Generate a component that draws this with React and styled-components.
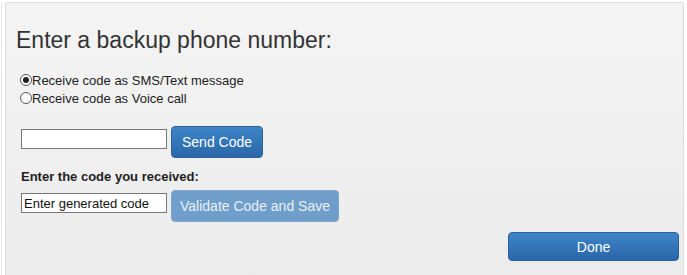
import React, { useState } from "react";
import styled, { createGlobalStyle } from "styled-components";

const GlobalStyle = createGlobalStyle`
  html, body {
    margin: 0;
    padding: 0;
    background: #ffffff;
    font-family: Arial, "Liberation Sans", sans-serif;
    overflow: hidden;
  }
`;

const Outer = styled.div`
  margin: 2px 3px 0 1px;
  padding: 0 0 0 3px;
  border-left: 1px solid #e4e4e4;
  height: 280px;
`;

const Panel = styled.div`
  box-sizing: border-box;
  height: 280px;
  border: 1px solid #dcdcdc;
  border-radius: 2px;
  background: linear-gradient(#f4f4f4, #ebebeb);
  padding: 23px 4px 0 10px;
  color: #333;
`;

const Heading = styled.h2`
  margin: 0 0 17px 0;
  font-size: 23px;
  font-weight: normal;
  line-height: 28px;
  color: #333;
`;

const RadioList = styled.div`
  display: flex;
  flex-direction: column;
  padding-left: 4px;
  margin-bottom: 19px;
`;

const RadioRow = styled.label`
  display: flex;
  align-items: center;
  height: 18px;
  font-size: 13px;
  color: #222;
  cursor: pointer;
`;

const Dot = styled.span`
  box-sizing: border-box;
  width: 12px;
  height: 12px;
  border-radius: 50%;
  border: 1px solid #555;
  background: #fff;
  display: flex;
  align-items: center;
  justify-content: center;
  &::after {
    content: "";
    width: 6px;
    height: 6px;
    border-radius: 50%;
    background: ${(p) => (p.checked ? "#222" : "transparent")};
  }
`;

const Row = styled.div`
  display: flex;
  align-items: flex-start;
  gap: 4px;
  padding-left: 5px;
`;

const TextInput = styled.input`
  box-sizing: border-box;
  width: 146px;
  height: 20px;
  margin-top: 3px;
  border: 1px solid #777;
  background: #fff;
  font-family: Arial, "Liberation Sans", sans-serif;
  font-size: 13px;
  color: #111;
  padding: 0 2px;
  outline: none;
  &::placeholder {
    color: #111;
  }
`;

const Button = styled.button`
  box-sizing: border-box;
  height: ${(p) => p.height || "32px"};
  width: ${(p) => p.width || "auto"};
  padding: 0;
  border: 1px solid ${(p) => (p.disabled ? "#7fa6cb" : "#2a5f98")};
  border-radius: 4px;
  background: ${(p) =>
    p.disabled ? "#6f9ecb" : "linear-gradient(#3d85c8, #2a67a9)"};
  color: ${(p) => (p.disabled ? "#e8f0f8" : "#fff")};
  font-family: Arial, "Liberation Sans", sans-serif;
  font-size: 14px;
  cursor: pointer;
`;

const Label = styled.div`
  font-size: 13px;
  font-weight: bold;
  color: #222;
  padding-left: 5px;
  margin: 11px 0 6px;
`;

const Footer = styled.div`
  display: flex;
  justify-content: flex-end;
  margin-top: 10px;
`;

export default function App() {
  const [mode, setMode] = useState("sms");
  return (
    <>
      <GlobalStyle />
      <Outer>
        <Panel>
          <Heading>Enter a backup phone number:</Heading>
          <RadioList>
            <RadioRow onClick={() => setMode("sms")}>
              <Dot checked={mode === "sms"} />
              Receive code as SMS/Text message
            </RadioRow>
            <RadioRow onClick={() => setMode("voice")}>
              <Dot checked={mode === "voice"} />
              Receive code as Voice call
            </RadioRow>
          </RadioList>
          <Row>
            <TextInput />
            <Button width="92px">Send Code</Button>
          </Row>
          <Label>Enter the code you received:</Label>
          <Row>
            <TextInput placeholder="Enter generated code" />
            <Button disabled width="168px">
              Validate Code and Save
            </Button>
          </Row>
          <Footer>
            <Button width="171px" height="29px">
              Done
            </Button>
          </Footer>
        </Panel>
      </Outer>
    </>
  );
}
